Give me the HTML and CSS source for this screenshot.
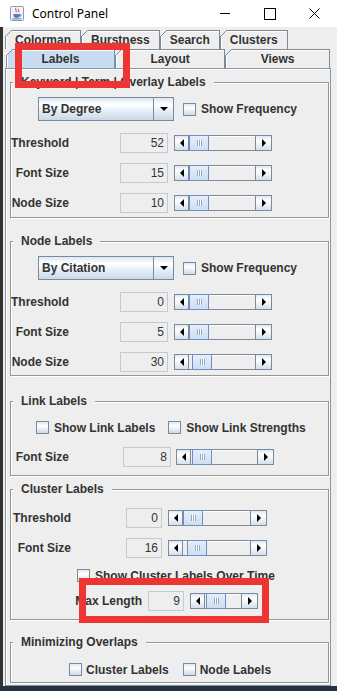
FILE: index.html
```html
<!DOCTYPE html>
<html lang="en">
<head>
<meta charset="UTF-8">
<title>Control Panel</title>
<link rel="stylesheet" href="styles.css">
</head>
<body>

<div class="window">
    <div class="titlebar">
        <svg class="app-icon" width="14" height="15" viewBox="0 0 14 15">
            <rect x="0.5" y="0.5" width="13" height="14" rx="1" fill="#f1f5fa" stroke="#8a9ab0"/>
            <path d="M6 2.2c-1.6 1.4 1.4 2.4 0 4.1M8.6 3c-1.1 1 1 2 0 3.4" stroke="#e2572b" fill="none" stroke-width="1.1"/>
            <path d="M3.4 8h6.6v1.4c0 1.5-1.5 2.5-3.3 2.5s-3.3-1-3.3-2.5z" fill="#5a7fb5"/>
            <path d="M10 8.5c1.4 0 1.5 1.7 0 1.9" stroke="#5a7fb5" fill="none"/>
            <path d="M2.4 12.9h9.2" stroke="#5a7fb5"/>
        </svg>
        <span class="title">Control Panel</span>
        <div class="controls">
            <span class="ctl"><span class="ctl-min"></span></span>
            <span class="ctl"><span class="ctl-max"></span></span>
            <span class="ctl">
                <svg width="11" height="11" viewBox="0 0 11 11"><path d="M0.5 0.5l10 10M10.5 0.5l-10 10" stroke="#000" stroke-width="1"/></svg>
            </span>
        </div>
    </div>

    <div class="frame">
        <div class="tabs">
            <div class="tab-row">
                <div class="tab">Colorman</div>
                <div class="tab">Burstness</div>
                <div class="tab">Search</div>
                <div class="tab">Clusters</div>
            </div>
            <div class="tab-row front">
                <div class="tab active">Labels</div>
                <div class="tab">Layout</div>
                <div class="tab">Views</div>
            </div>
        </div>

        <div class="tab-body">
            <fieldset class="group g-keyword">
                <legend>Keyword | Term | Overlay Labels</legend>
                <div class="pick-row">
                    <div class="combo"><span class="combo-text">By Degree</span><span class="combo-arrow"></span></div>
                    <label class="check"><span class="box"></span>Show Frequency</label>
                </div>
                <div class="row first">
                    <span class="lbl">Threshold</span>
                    <span class="num">52</span>
                    <div class="sb"><span class="sb-btn left"></span><span class="sb-track"><span class="sb-thumb" style="margin-left:0px"></span></span><span class="sb-btn right"></span></div>
                </div>
                <div class="row">
                    <span class="lbl">Font Size</span>
                    <span class="num">15</span>
                    <div class="sb"><span class="sb-btn left"></span><span class="sb-track"><span class="sb-thumb" style="margin-left:0px"></span></span><span class="sb-btn right"></span></div>
                </div>
                <div class="row">
                    <span class="lbl">Node Size</span>
                    <span class="num">10</span>
                    <div class="sb"><span class="sb-btn left"></span><span class="sb-track"><span class="sb-thumb" style="margin-left:0px"></span></span><span class="sb-btn right"></span></div>
                </div>
            </fieldset>

            <fieldset class="group g-node">
                <legend>Node Labels</legend>
                <div class="pick-row">
                    <div class="combo"><span class="combo-text">By Citation</span><span class="combo-arrow"></span></div>
                    <label class="check"><span class="box"></span>Show Frequency</label>
                </div>
                <div class="row first">
                    <span class="lbl">Threshold</span>
                    <span class="num">0</span>
                    <div class="sb"><span class="sb-btn left"></span><span class="sb-track"><span class="sb-thumb" style="margin-left:0px"></span></span><span class="sb-btn right"></span></div>
                </div>
                <div class="row">
                    <span class="lbl">Font Size</span>
                    <span class="num">5</span>
                    <div class="sb"><span class="sb-btn left"></span><span class="sb-track"><span class="sb-thumb" style="margin-left:0px"></span></span><span class="sb-btn right"></span></div>
                </div>
                <div class="row">
                    <span class="lbl">Node Size</span>
                    <span class="num">30</span>
                    <div class="sb"><span class="sb-btn left"></span><span class="sb-track"><span class="sb-thumb" style="margin-left:3px"></span></span><span class="sb-btn right"></span></div>
                </div>
            </fieldset>

            <fieldset class="group g-link">
                <legend>Link Labels</legend>
                <div class="check-row">
                    <label class="check"><span class="box"></span>Show Link Labels</label>
                    <label class="check"><span class="box"></span>Show Link Strengths</label>
                </div>
                <div class="row">
                    <span class="lbl">Font Size</span>
                    <span class="num">8</span>
                    <div class="sb"><span class="sb-btn left"></span><span class="sb-track"><span class="sb-thumb" style="margin-left:1px"></span></span><span class="sb-btn right"></span></div>
                </div>
            </fieldset>

            <fieldset class="group g-cluster">
                <legend>Cluster Labels</legend>
                <div class="row first">
                    <span class="lbl">Threshold</span>
                    <span class="num">0</span>
                    <div class="sb"><span class="sb-btn left"></span><span class="sb-track"><span class="sb-thumb" style="margin-left:0px"></span></span><span class="sb-btn right"></span></div>
                </div>
                <div class="row">
                    <span class="lbl">Font Size</span>
                    <span class="num">16</span>
                    <div class="sb"><span class="sb-btn left"></span><span class="sb-track"><span class="sb-thumb" style="margin-left:4px"></span></span><span class="sb-btn right"></span></div>
                </div>
                <div class="check-row">
                    <label class="check"><span class="box"></span>Show Cluster Labels Over Time</label>
                </div>
                <div class="row max-row">
                    <span class="lbl">Max Length</span>
                    <span class="num">9</span>
                    <div class="sb"><span class="sb-btn left"></span><span class="sb-track"><span class="sb-thumb" style="margin-left:1px"></span></span><span class="sb-btn right"></span></div>
                </div>
            </fieldset>

            <fieldset class="group g-overlap">
                <legend>Minimizing Overlaps</legend>
                <div class="check-row">
                    <label class="check"><span class="box"></span>Cluster Labels</label>
                    <label class="check"><span class="box"></span>Node Labels</label>
                </div>
            </fieldset>
        </div>
    </div>

    <!-- red highlight boxes drawn over the screenshot -->
    <div class="mark mark-tab"></div>
    <div class="mark mark-length"></div>
</div>

</body>
</html>
```

FILE: styles.css
```css
body {
    margin: 0;
    width: 337px;
    height: 691px;
    overflow: hidden;
    background-color: #eeeeee;
    font-family: "Liberation Sans", Arial, sans-serif;
    color: #333;
}

.window {
    position: relative;
    height: 691px;
    display: flex;
    flex-direction: column;
}

/* title bar */

.titlebar {
    flex: none;
    height: 27px;
    background: #fff;
    display: flex;
    align-items: center;
}

.app-icon {
    margin-left: 10px;
    flex: none;
}

.title {
    margin-left: 8px;
    font-family: "Noto Sans", "Open Sans", sans-serif;
    font-size: 12px;
    color: #000;
}

.controls {
    margin-left: auto;
    display: flex;
    height: 27px;
}

.ctl {
    width: 45px;
    display: flex;
    align-items: center;
    justify-content: center;
}

.ctl-min {
    width: 10px;
    height: 1px;
    background: #000;
}

.ctl-max {
    width: 10px;
    height: 10px;
    border: 1px solid #000;
}

/* frame around the tabbed pane */

.frame {
    flex: 1;
    min-height: 0;
    display: flex;
    flex-direction: column;
    border-left: 3px solid #34332f;
    border-bottom: 5px solid #27313d;
    padding: 3px 6px 0 2px;
}

.tabs {
    flex: none;
}

.tab-row {
    display: flex;
    height: 19px;
}

.tab-row.front {
    padding: 0 1px;
}

.tab {
    position: relative;
    box-sizing: border-box;
    height: 19px;
    padding: 0 9px;
    border: 1px solid #7a8a99;
    border-bottom: none;
    background: #eeeeee;
    box-shadow: inset 1px 1px 0 #fff;
    display: flex;
    align-items: center;
    justify-content: center;
    font-size: 12px;
    font-weight: bold;
    color: #333;
}

.tab::before {
    content: "";
    position: absolute;
    top: -1px;
    left: -1px;
    width: 7px;
    height: 7px;
    background: linear-gradient(135deg, #eeeeee 0 calc(50% - 0.5px), #7a8a99 calc(50% - 0.5px) calc(50% + 0.6px), transparent calc(50% + 0.6px));
}

.front .tab {
    flex: 1 1 auto;
}

.tab.active {
    background: #c8ddf2;
    border-color: #7b8fae;
}

.tab-body {
    flex: 1;
    min-height: 0;
    border: 1px solid #8596ab;
    box-shadow: inset 1px 1px 0 #fff;
    padding: 6px 1px 0 4px;
    display: flex;
    flex-direction: column;
}

/* titled groups */

.group {
    margin: 0;
    padding: 0;
    min-width: 0;
    border: 1px solid #959595;
    box-shadow: 1px 1px 0 #fff, inset 1px 1px 0 #fff;
}

.group legend {
    margin-left: 2px;
    padding: 0 8px;
    font-size: 12px;
    font-weight: bold;
    line-height: 14px;
    color: #333;
    background: #eeeeee;
}

.g-keyword { padding: 8px 0 4px; }
.g-node { margin-top: 16px; padding: 8px 0 3px; }
.g-link { margin-top: 18px; padding: 12px 0 8px; }
.g-cluster { margin-top: 6px; padding: 0 0 8px; }
.g-overlap { margin-top: 15px; padding: 13px 0 5px; }

/* combo + checkbox row */

.pick-row {
    display: flex;
    align-items: center;
    height: 24px;
    padding-left: 27px;
}

.combo {
    box-sizing: border-box;
    width: 136px;
    height: 24px;
    border: 1px solid #7a8a99;
    background: linear-gradient(#dde8f3, #fff 30%, #e6eef6 60%, #c9d8e7);
    display: flex;
}

.combo-text {
    flex: 1;
    padding-left: 3px;
    font-size: 12px;
    font-weight: bold;
    line-height: 22px;
    color: #333;
}

.combo-arrow {
    width: 19px;
    border-left: 1px solid #7a8a99;
    display: flex;
    align-items: center;
    justify-content: center;
}

.combo-arrow::before {
    content: "";
    border-left: 4px solid transparent;
    border-right: 4px solid transparent;
    border-top: 4px solid #000;
}

.check {
    display: flex;
    align-items: center;
    gap: 5px;
    font-size: 12px;
    font-weight: bold;
    color: #333;
    white-space: nowrap;
}

.pick-row .check {
    margin-left: 9px;
}

.box {
    box-sizing: border-box;
    width: 13px;
    height: 13px;
    border: 1px solid #7a8a99;
    background: linear-gradient(#dde8f3, #fff 35%, #e8eef5 65%, #cbd9e7);
}

.check-row {
    display: flex;
    align-items: center;
    height: 15px;
}

.g-link .check-row { padding-left: 25px; }
.g-link .check + .check { margin-left: 13px; }

.g-cluster .check-row { padding-left: 66px; margin-top: 10px; }

.g-overlap .check-row { padding-left: 58px; }
.g-overlap .check { gap: 4px; }
.g-overlap .check + .check { margin-left: 14px; }

/* label / value / slider rows */

.row {
    display: flex;
    align-items: center;
    height: 20px;
    margin-top: 10px;
}

.row.first {
    margin-top: 12px;
}

.lbl {
    flex: none;
    width: 58px;
    margin-right: 51px;
    text-align: right;
    font-size: 12px;
    font-weight: bold;
    color: #333;
    white-space: nowrap;
}

.num {
    flex: none;
    box-sizing: border-box;
    width: 48px;
    height: 20px;
    margin-right: 6px;
    padding-right: 3px;
    border: 1px solid #c3cad2;
    background: #eeeeee;
    text-align: right;
    font-size: 12px;
    line-height: 18px;
    color: #333;
}

.g-link .row { margin-top: 12px; }
.g-link .lbl { margin-right: 54px; }
.g-link .num { margin-right: 5px; }

.g-cluster .lbl { width: 60px; margin-right: 55px; }
.g-cluster .num { width: 36px; }
.g-cluster .sb { width: 99px; }

.g-cluster .max-row { margin-top: 8px; }
.g-cluster .max-row .lbl { width: 131px; margin-right: 6px; }
.g-cluster .max-row .sb { width: 68px; }

/* scrollbar */

.sb {
    flex: none;
    box-sizing: border-box;
    width: 98px;
    height: 16px;
    border: 1px solid #7a8a99;
    background: #eeeeee;
    display: flex;
}

.sb-btn {
    flex: none;
    width: 13px;
    background: linear-gradient(#dde8f3, #fff 30%, #eef3f8 60%, #d3dfeb);
    display: flex;
    align-items: center;
    justify-content: center;
}

.sb-btn.left {
    border-right: 1px solid #7a8a99;
}

.sb-btn.right {
    width: 15px;
    border-left: 1px solid #7a8a99;
}

.sb-btn.left::before {
    content: "";
    border-top: 4px solid transparent;
    border-bottom: 4px solid transparent;
    border-right: 4px solid #000;
}

.sb-btn.right::before {
    content: "";
    border-top: 4px solid transparent;
    border-bottom: 4px solid transparent;
    border-left: 4px solid #000;
}

.sb-track {
    flex: 1;
    min-width: 0;
    display: flex;
    box-shadow: inset 0 1px 0 #fff;
}

.sb-thumb {
    flex: none;
    box-sizing: border-box;
    width: 20px;
    margin-top: -1px;
    margin-bottom: -1px;
    border: 1px solid #6f8fc4;
    background: linear-gradient(#e6eef8, #cddff2);
    display: flex;
    align-items: center;
    justify-content: center;
}

.sb-thumb::before {
    content: "";
    width: 5px;
    height: 6px;
    background: repeating-linear-gradient(90deg, #8ea7cc 0 1px, #fff 1px 2px);
}

/* red highlight boxes */

.mark {
    position: absolute;
    box-sizing: border-box;
    border: 7px solid #ef3434;
}

.mark-tab {
    left: 15px;
    top: 43px;
    width: 115px;
    height: 45px;
}

.mark-length {
    left: 79px;
    top: 578px;
    width: 190px;
    height: 45px;
}
```
